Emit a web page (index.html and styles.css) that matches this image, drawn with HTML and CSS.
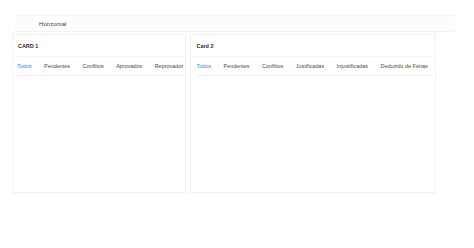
FILE: index.html
```html
<!DOCTYPE html>
<html lang="pt">
<head>
<meta charset="utf-8">
<title>Horizontal</title>
<link rel="stylesheet" href="styles.css">
</head>
<body>
<div class="page">
  <div class="top-tabs">
    <div class="top-tab">Horizontal</div>
  </div>
  <div class="cards">
    <div class="card card-1">
      <div class="card-head">CARD 1</div>
      <div class="tabs">
        <span class="tab active">Todos</span>
        <span class="tab">Pendentes</span>
        <span class="tab">Conflitos</span>
        <span class="tab">Aprovados</span>
        <span class="tab">Reprovados</span>
      </div>
    </div>
    <div class="card card-2">
      <div class="card-head">Card 2</div>
      <div class="tabs">
        <span class="tab active">Todos</span>
        <span class="tab">Pendentes</span>
        <span class="tab">Conflitos</span>
        <span class="tab">Justificadas</span>
        <span class="tab">Injustificadas</span>
        <span class="tab">Deduzido de Férias</span>
      </div>
    </div>
  </div>
</div>
</body>
</html>
```
FILE: styles.css
```css
* { box-sizing: border-box; }
html, body { margin: 0; padding: 0; background: #ffffff; }
body {
  font-family: "Liberation Sans", Arial, sans-serif;
  font-size: 5.45px;
  color: #4a4a4a;
}
.page { padding-top: 15px; }
.top-tabs {
  margin: 0 19px 0 15px;
  height: 17px;
  background: #fcfcfc;
  border-top: 1px solid #f6f6f6;
  border-bottom: 1px solid #f3f3f3;
  display: flex;
  align-items: stretch;
  padding-left: 18px;
}
.top-tab {
  background: #ffffff;
  padding: 0 6px;
  display: flex;
  align-items: center;
  font-size: 6.1px;
  color: #3c3c3c;
}
.cards {
  display: flex;
  align-items: flex-start;
  padding-left: 12px;
  margin-top: 2px;
}
.card {
  height: 159px;
  border: 1px solid #f1f1f1;
  background: #ffffff;
  box-shadow: 0 2px 1px -1px rgba(0,0,0,0.025);
  border-radius: 1px;
}
.card-1 { width: 174px; }
.card-2 { width: 246px; margin-left: 4px; }
.card-head {
  height: 22px;
  display: flex;
  align-items: center;
  padding: 0 5px;
  font-weight: bold;
  color: #2a2a2a;
  border-bottom: 1px solid #f6f6f6;
}
.card-2 .card-head { padding: 0 5.5px; }
.tabs {
  margin: 0 2px 0 4px;
  height: 19px;
  display: flex;
  align-items: center;
  gap: 12.5px;
  border-bottom: 1px solid #f1f1f1;
  overflow: hidden;
  white-space: nowrap;
}
.card-2 .tabs { margin-left: 5.5px; }
.tab { flex: none; color: #4a4a4a; }
.tab.active { color: #1890ff; }
```
